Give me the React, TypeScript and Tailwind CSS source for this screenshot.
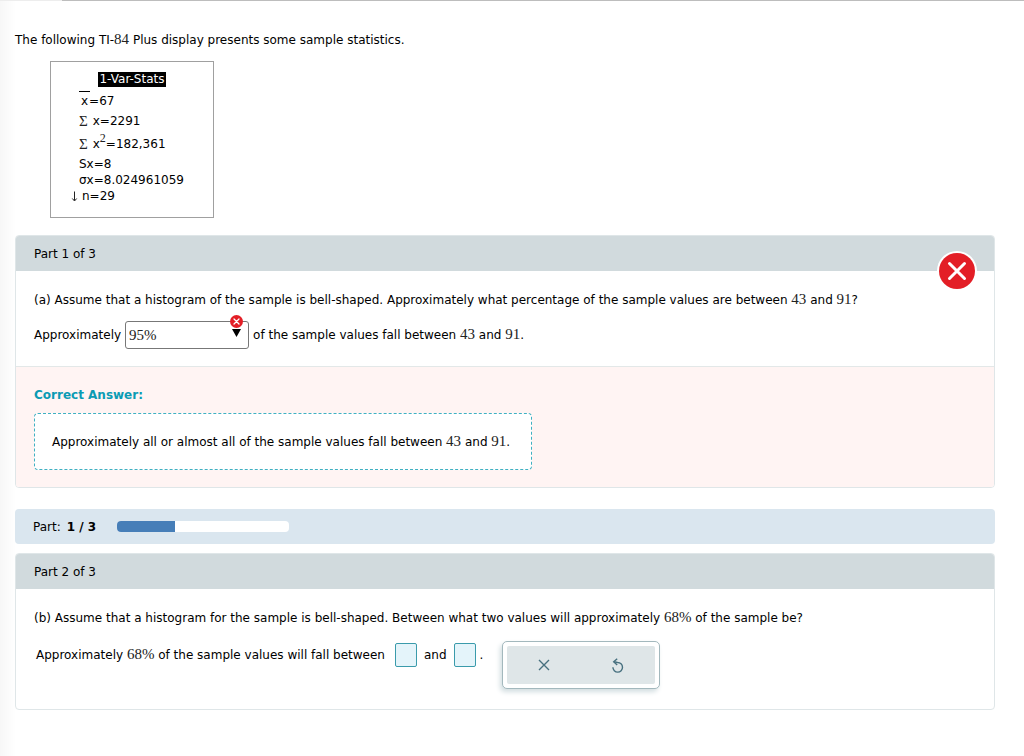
import type { ReactNode } from 'react'

function Num({ children }: { children: ReactNode }) {
  return (
    <span className="font-['Liberation_Serif',serif] text-[15px] leading-none text-[#222]">
      {children}
    </span>
  )
}

function Panel({ title, children }: { title: string; children: ReactNode }) {
  return (
    <section className="relative overflow-hidden rounded border border-[#dfe6e8] bg-white">
      <h2 className="flex h-[35px] items-center bg-[#d1dadd] px-[18px]">
        {title}
      </h2>
      {children}
    </section>
  )
}

function WrongMark() {
  return (
    <svg className="block h-full w-full" viewBox="0 0 40 40" role="img" aria-label="Incorrect">
      <circle cx="20" cy="20" r="20" fill="#fff" />
      <circle cx="20" cy="20" r="18" fill="#e31e26" />
      <path
        d="M12.5 12.5l15 15M27.5 12.5l-15 15"
        stroke="#fff"
        strokeWidth="3"
        strokeLinecap="round"
      />
    </svg>
  )
}

function SmallWrongMark() {
  return (
    <svg className="block h-[13px] w-[13px]" viewBox="0 0 12 12" aria-hidden="true">
      <circle cx="6" cy="6" r="6" fill="#e31e26" />
      <path d="M3.7 3.7l4.6 4.6M8.3 3.7l-4.6 4.6" stroke="#fff" strokeWidth="1.2" strokeLinecap="round" />
    </svg>
  )
}

function Calculator() {
  return (
    <div className="ml-[35px] mt-[13px] h-[157px] w-[164px] border border-[#a0a0a0] pt-[9px]">
      <div className="text-center leading-4">
        <span className="inline-block h-[15px] bg-black px-px leading-[15px] text-white">1-Var-Stats</span>
      </div>
      <div className="pl-7">
        <div className="mt-1 w-[11px] border-t border-black" />
        <div className="flex gap-px pl-0.5 leading-[18px]">
          <span>x</span>
          <span>=67</span>
        </div>
        <div className="flex gap-[5px] leading-[22px]">
          <span className="font-['Liberation_Serif',serif] text-[15px] text-[#222]">Σ</span>
          <span>x=2291</span>
        </div>
        <div className="flex h-6 items-center gap-[5px]">
          <span className="font-['Liberation_Serif',serif] text-[15px] text-[#222]">Σ</span>
          <span>
            x
            <sup className="-top-1.5 font-['Liberation_Serif',serif] text-xs leading-none text-[#222]">2</sup>
            =182,361
          </span>
        </div>
        <div className="leading-4">Sx=8</div>
        <div className="leading-4">σx=8.024961059</div>
      </div>
      <div className="flex items-center pl-5 leading-4">
        <svg className="mr-1 h-[11px] w-[7px]" viewBox="0 0 7 11" aria-hidden="true">
          <path d="M3.5 0.5v9M1.3 7.5l2.2 2.5 2.2-2.5" fill="none" stroke="#222" strokeWidth="1" />
        </svg>
        n=29
      </div>
    </div>
  )
}

export default function App() {
  return (
    <div className="min-h-screen bg-white bg-[linear-gradient(to_right,#f7f7f7,#ffffff_16px)] font-['DejaVu_Sans',Verdana,sans-serif] text-xs leading-4 text-black">
      <div className="flex h-px">
        <div className="w-[62px] bg-[#ededed]" />
        <div className="grow bg-[#bdbdbd]" />
      </div>
      <main className="pb-10 pl-[15px] pr-[29px] pt-[31px]">
        <p>
          The following TI-<Num>84</Num> Plus display presents some sample statistics.
        </p>
        <Calculator />

        <div className="relative mt-[17px]">
          <Panel title="Part 1 of 3">
            <div className="h-[95px] px-[18px] pt-[21px]">
              <p>
                (a) Assume that a histogram of the sample is bell-shaped. Approximately what percentage of the sample
                values are between <Num>43</Num> and <Num>91</Num>?
              </p>
              <div className="mt-[13px] flex items-center">
                <label htmlFor="percentage">Approximately</label>
                <span className="relative mx-1">
                  <select
                    id="percentage"
                    defaultValue="95"
                    className="block h-7 w-[124px] appearance-none rounded-[3px] border border-[#777] bg-white pl-[3px] font-['Liberation_Serif',serif] text-[15px] text-[#222]"
                  >
                    <option value="68">68%</option>
                    <option value="95">95%</option>
                    <option value="all">all or almost all</option>
                  </select>
                  <svg
                    className="pointer-events-none absolute right-2 top-2 h-2 w-[9px]"
                    viewBox="0 0 9 8"
                    aria-hidden="true"
                  >
                    <path d="M0 0h9L4.5 8z" fill="#000" />
                  </svg>
                  <span className="pointer-events-none absolute -top-1.5 right-1.5">
                    <SmallWrongMark />
                  </span>
                </span>
                <span>
                  of the sample values fall between <Num>43</Num> and <Num>91</Num>.
                </span>
              </div>
            </div>
            <div className="h-[121px] border-t border-[#e3e8e8] bg-[#fff4f3] px-[18px] pt-5">
              <h3 className="font-bold text-[#0b9bb4]">Correct Answer:</h3>
              <div className="mt-[10px] flex h-[57px] w-fit items-center rounded border border-dashed border-[#3fb0c2] bg-white pl-[17px] pr-[21px]">
                <p>
                  Approximately all or almost all of the sample values fall between <Num>43</Num> and <Num>91</Num>.
                </p>
              </div>
            </div>
          </Panel>
          <span className="absolute right-[18px] top-4 h-10 w-10">
            <WrongMark />
          </span>
        </div>

        <div className="mt-[21px] flex h-[35px] items-center rounded bg-[#dae6ef] px-[18px]">
          <span className="flex gap-1.5">
            Part: <b>1 / 3</b>
          </span>
          <div
            className="ml-[21px] h-[11px] w-[172px] overflow-hidden rounded bg-white"
            role="progressbar"
            aria-label="Parts"
            aria-valuemin={0}
            aria-valuemax={3}
            aria-valuenow={1}
          >
            <div className="h-full w-1/3 bg-[#467eb8]" />
          </div>
        </div>

        <div className="mt-[9px]">
          <Panel title="Part 2 of 3">
            <div className="h-[120px] px-[18px] pt-[21px]">
              <p>
                (b) Assume that a histogram for the sample is bell-shaped. Between what two values will approximately{' '}
                <Num>68%</Num> of the sample be?
              </p>
              <div className="mt-[15px] flex items-start">
                <div className="flex items-center pl-0.5 pt-0.5">
                  <label htmlFor="low">
                    Approximately <Num>68%</Num> of the sample values will fall between
                  </label>
                  <input
                    id="low"
                    className="ml-[10px] mr-[7px] h-6 w-[22px] rounded-[2px] border border-[#3a9bab] bg-[#e4f4fa] text-center"
                  />
                  <label htmlFor="high">and</label>
                  <input
                    id="high"
                    className="ml-[7px] mr-1 h-6 w-[22px] rounded-[2px] border border-[#3a9bab] bg-[#e4f4fa] text-center"
                  />
                  .
                </div>
                <div className="ml-[19px] w-[158px] rounded-[5px] border border-[#a3b8bd] bg-white p-1 shadow-[-2px_3px_5px_#d3dee1]">
                  <div className="grid h-[38px] grid-cols-2 rounded-[2px] bg-[#dfe6e8] text-[#47707f]">
                    <button type="button" aria-label="Clear" className="flex items-center justify-center">
                      <svg className="h-3 w-3" viewBox="0 0 12 12" fill="none" stroke="currentColor" strokeWidth="1.4">
                        <path d="M1 1l10 10M11 1L1 11" />
                      </svg>
                    </button>
                    <button type="button" aria-label="Reset" className="flex items-center justify-center">
                      <svg className="h-[15px] w-3" viewBox="0 0 12 15" fill="none" stroke="currentColor" strokeWidth="1.4">
                        <path d="M5.2 0.7L1.7 3.8l3.5 3.1" />
                        <path d="M2 3.8l3.6 0.7a4.8 4.8 0 1 1-4.7 4.8" />
                      </svg>
                    </button>
                  </div>
                </div>
              </div>
            </div>
          </Panel>
        </div>
      </main>
    </div>
  )
}
